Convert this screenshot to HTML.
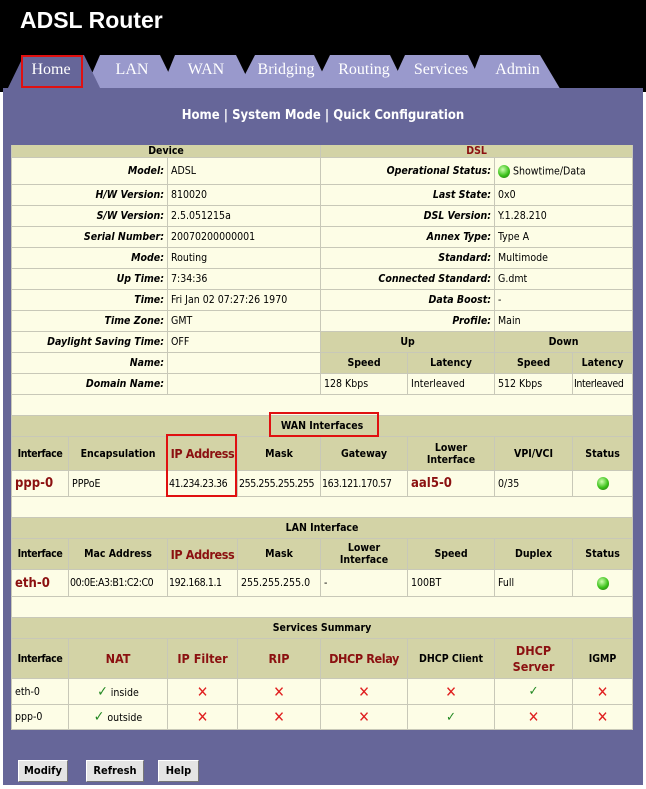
<!DOCTYPE html>
<html><head><meta charset="utf-8"><style>
*{margin:0;padding:0;box-sizing:border-box}
body{width:646px;height:789px;background:#fff;position:relative;overflow:hidden;font-family:"DejaVu Sans Condensed",sans-serif;font-size:10.5px;color:#000}
#hdr{position:absolute;left:0;top:0;width:646px;height:92px;background:#000}
#title{position:absolute;left:20px;top:7px;color:#fff;font:bold 23px "Liberation Sans",sans-serif}
.tab{position:absolute;top:55px;height:37px;font:16px "Liberation Serif",serif;color:#fff;text-align:center;padding-top:6px}
#panel{position:absolute;left:3px;top:88px;width:640px;height:697px;background:#666699}
#nav{position:absolute;left:0;top:108px;width:646px;text-align:center;color:#fff;font-size:13px;font-weight:bold}
table{position:absolute;left:11px;top:133px;border-collapse:collapse;table-layout:fixed;width:621px;background:#fdfde6}
td{border:1px solid #c8c8b8;padding:0 3px;height:21px;white-space:nowrap;overflow:hidden}
.h{background:#d3d3a6;font-weight:bold;text-align:center}
.l{font-weight:bold;font-style:italic;text-align:right}
.r{color:#8b1010}
.c{text-align:center}
.x{color:#e02020;text-align:center;font-size:15px}
.ck{color:#228822;text-align:center;font-size:13px}
.big{color:#8b1010;font-weight:bold;font-size:13px}
.rh{color:#8b1010;font-size:12.5px}
.t{letter-spacing:-0.4px;padding:0 1px}
.led{display:inline-block;width:12px;height:13px;border-radius:50%;background:radial-gradient(circle at 40% 35%,#cfffb0,#3cc21a 55%,#1d6a10);vertical-align:middle}
#cover{position:absolute;left:3px;top:88px;width:640px;height:57px;background:#666699}
.btn{position:absolute;top:760px;height:22px;background:#e4e4e4;border:1px solid #fff;border-right-color:#777;border-bottom-color:#777;font-weight:bold;font-size:11px;text-align:center;line-height:20px}
.rb{position:absolute;border:2px solid #e01010}
</style></head><body>
<div id="hdr"></div>
<div id="title">ADSL Router</div>
<svg style="position:absolute;left:0;top:52px" width="646" height="40">
<g fill="#9999cc">
<polygon points="562,40 540,3 480,3 466,40"/>
<polygon points="486,40 468,3 405,3 388,40"/>
<polygon points="408,40 390,3 330,3 312,40"/>
<polygon points="332,40 314,3 255,3 236,40"/>
<polygon points="254,40 236,3 175,3 160,40"/>
<polygon points="178,40 160,3 100,3 84,40"/>
</g>
<polygon points="102,40 84,3 24,3 6,40" fill="#666699"/>
</svg>
<div class="tab" style="left:20px;width:62px">Home</div>
<div class="tab" style="left:100px;width:64px">LAN</div>
<div class="tab" style="left:175px;width:62px">WAN</div>
<div class="tab" style="left:252px;width:68px">Bridging</div>
<div class="tab" style="left:330px;width:68px">Routing</div>
<div class="tab" style="left:405px;width:72px">Services</div>
<div class="tab" style="left:485px;width:65px">Admin</div>
<div id="panel"></div>
<table>
<colgroup><col style="width:57px"><col style="width:99px"><col style="width:70px"><col style="width:83px"><col style="width:87px"><col style="width:87px"><col style="width:78px"><col style="width:60px"></colgroup>
<tr style="height:24px"><td class="h" colspan="4" style="vertical-align:bottom">Device</td><td class="h r" colspan="4" style="vertical-align:bottom">DSL</td></tr>
<tr style="height:27px"><td class="l" colspan="2">Model:</td><td colspan="2">ADSL</td><td class="l" colspan="2">Operational Status:</td><td colspan="2"><span class="led"></span> Showtime/Data</td></tr>
<tr><td class="l" colspan="2">H/W Version:</td><td colspan="2">810020</td><td class="l" colspan="2">Last State:</td><td colspan="2">0x0</td></tr>
<tr><td class="l" colspan="2">S/W Version:</td><td colspan="2">2.5.051215a</td><td class="l" colspan="2">DSL Version:</td><td colspan="2">Y.1.28.210</td></tr>
<tr><td class="l" colspan="2">Serial Number:</td><td colspan="2">20070200000001</td><td class="l" colspan="2">Annex Type:</td><td colspan="2">Type A</td></tr>
<tr><td class="l" colspan="2">Mode:</td><td colspan="2">Routing</td><td class="l" colspan="2">Standard:</td><td colspan="2">Multimode</td></tr>
<tr><td class="l" colspan="2">Up Time:</td><td colspan="2">7:34:36</td><td class="l" colspan="2">Connected Standard:</td><td colspan="2">G.dmt</td></tr>
<tr><td class="l" colspan="2">Time:</td><td colspan="2">Fri Jan 02 07:27:26 1970</td><td class="l" colspan="2">Data Boost:</td><td colspan="2">-</td></tr>
<tr><td class="l" colspan="2">Time Zone:</td><td colspan="2">GMT</td><td class="l" colspan="2">Profile:</td><td colspan="2">Main</td></tr>
<tr><td class="l" colspan="2">Daylight Saving Time:</td><td colspan="2">OFF</td><td class="h" colspan="2">Up</td><td class="h" colspan="2">Down</td></tr>
<tr><td class="l" colspan="2">Name:</td><td colspan="2"></td><td class="h">Speed</td><td class="h">Latency</td><td class="h">Speed</td><td class="h">Latency</td></tr>
<tr><td class="l" colspan="2">Domain Name:</td><td colspan="2"></td><td>128 Kbps</td><td>Interleaved</td><td>512 Kbps</td><td class="t">Interleaved</td></tr>
<tr><td colspan="8"></td></tr>
<tr><td class="h" colspan="8">WAN Interfaces</td></tr>
<tr style="height:34px"><td class="h t">Interface</td><td class="h">Encapsulation</td><td class="h rh t">IP Address</td><td class="h">Mask</td><td class="h">Gateway</td><td class="h" style="line-height:12px">Lower<br>Interface</td><td class="h">VPI/VCI</td><td class="h">Status</td></tr>
<tr style="height:26px"><td class="big">ppp-0</td><td>PPPoE</td><td class="t">41.234.23.36</td><td class="t">255.255.255.255</td><td class="t">163.121.170.57</td><td class="big">aal5-0</td><td>0/35</td><td class="c"><span class="led"></span></td></tr>
<tr style="height:19px"><td colspan="8"></td></tr>
<tr><td class="h" colspan="8">LAN Interface</td></tr>
<tr style="height:31px"><td class="h t">Interface</td><td class="h">Mac Address</td><td class="h rh t">IP Address</td><td class="h">Mask</td><td class="h" style="line-height:12px">Lower<br>Interface</td><td class="h">Speed</td><td class="h">Duplex</td><td class="h">Status</td></tr>
<tr style="height:27px"><td class="big">eth-0</td><td class="t">00:0E:A3:B1:C2:C0</td><td class="t">192.168.1.1</td><td>255.255.255.0</td><td>-</td><td>100BT</td><td>Full</td><td class="c"><span class="led"></span></td></tr>
<tr><td colspan="8"></td></tr>
<tr><td class="h" colspan="8">Services Summary</td></tr>
<tr style="height:40px"><td class="h t">Interface</td><td class="h rh">NAT</td><td class="h rh">IP Filter</td><td class="h rh">RIP</td><td class="h rh t">DHCP Relay</td><td class="h">DHCP Client</td><td class="h rh" style="line-height:16px">DHCP<br>Server</td><td class="h">IGMP</td></tr>
<tr style="height:26px"><td>eth-0</td><td class="c"><span style="color:#228822;font-size:14px">✓</span> inside</td><td class="x">✕</td><td class="x">✕</td><td class="x">✕</td><td class="x">✕</td><td class="ck">✓</td><td class="x">✕</td></tr>
<tr style="height:25px"><td>ppp-0</td><td class="c"><span style="color:#228822;font-size:14px">✓</span> outside</td><td class="x">✕</td><td class="x">✕</td><td class="x">✕</td><td class="ck">✓</td><td class="x">✕</td><td class="x">✕</td></tr>
</table>
<div id="cover"></div>
<div id="nav">Home | System Mode | Quick Configuration</div>
<div class="btn" style="left:18px;width:50px">Modify</div>
<div class="btn" style="left:86px;width:58px">Refresh</div>
<div class="btn" style="left:158px;width:41px">Help</div>
<div class="rb" style="left:21px;top:55px;width:62px;height:33px"></div>
<div class="rb" style="left:269px;top:412px;width:110px;height:25px"></div>
<div class="rb" style="left:166px;top:434px;width:71px;height:63px"></div>
</body></html>
